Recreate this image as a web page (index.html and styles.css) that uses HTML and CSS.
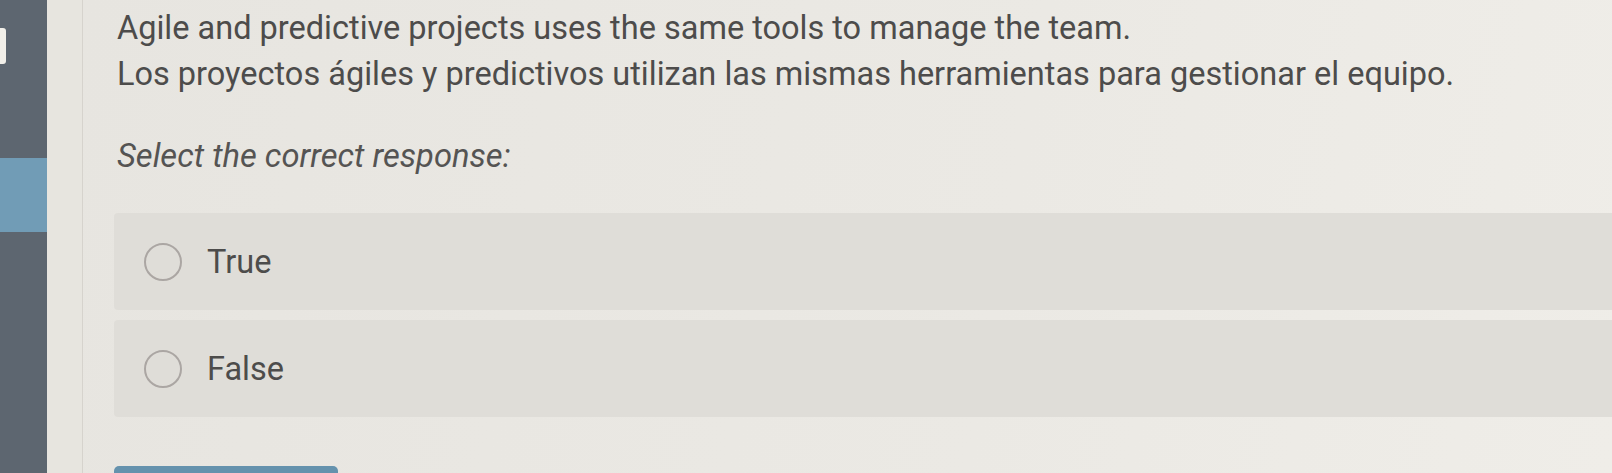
FILE: index.html
```html
<!DOCTYPE html>
<html lang="en">
<head>
  <meta charset="UTF-8">
  <title>Question</title>
  <link rel="stylesheet" href="styles.css">
</head>
<body>

  <div class="sidebar">
    <div class="tab"></div>
    <div class="nav-active"></div>
  </div>
  <div class="gutter"></div>

  <main class="question">
    <p class="prompt">
      Agile and predictive projects uses the same tools to manage the team.<br>
      Los proyectos ágiles y predictivos utilizan las mismas herramientas para gestionar el equipo.
    </p>

    <p class="hint">Select the correct response:</p>

    <div class="options">
      <label class="option">
        <span class="radio"></span>
        <span class="label">True</span>
      </label>
      <label class="option">
        <span class="radio"></span>
        <span class="label">False</span>
      </label>
    </div>

    <div class="submit"></div>
  </main>

</body>
</html>
```

FILE: styles.css
```css
body {
  margin: 0;
  height: 100vh;
  overflow: hidden;
  display: flex;
  font-family: Roboto, 'Liberation Sans', sans-serif;
  background: #e8e6e1;
  color: #4d4c4b;
}

.sidebar {
  width: 47px;
  flex-shrink: 0;
  background: #5d6670;
  display: flex;
  flex-direction: column;
}

.tab {
  width: 6px;
  height: 36px;
  margin-top: 28px;
  background: #f1efe9;
  border-radius: 0 3px 3px 0;
}

.nav-active {
  height: 74px;
  margin-top: 94px;
  background: #719cb6;
}

.gutter {
  width: 35px;
  flex-shrink: 0;
  background: #e7e5df;
  border-right: 1px solid #d6d3cd;
}

.question {
  flex: 1;
  padding-left: 31px;
  background: linear-gradient(100deg, #e7e5e0 0%, #ebe9e4 60%, #efede8 100%);
}

.prompt {
  margin: 5px 0 0 3px;
  font-size: 32.5px;
  line-height: 46px;
}

.hint {
  margin: 40px 0 0 3px;
  font-size: 32.7px;
  font-style: italic;
  color: #555453;
}

.options {
  margin-top: 38px;
  display: flex;
  flex-direction: column;
  gap: 10px;
}

.option {
  height: 97px;
  display: flex;
  align-items: center;
  gap: 25px;
  padding-left: 30px;
  background: #dfddd8;
  border-radius: 4px 0 0 4px;
  font-size: 32.5px;
  cursor: pointer;
}

.radio {
  width: 34px;
  height: 34px;
  border: 2px solid #aba6a3;
  border-radius: 50%;
}

/* button peeks in at the bottom edge */
.submit {
  margin-top: 49px;
  width: 224px;
  height: 8px;
  background: #6592ad;
  border-radius: 5px 5px 0 0;
}
```
